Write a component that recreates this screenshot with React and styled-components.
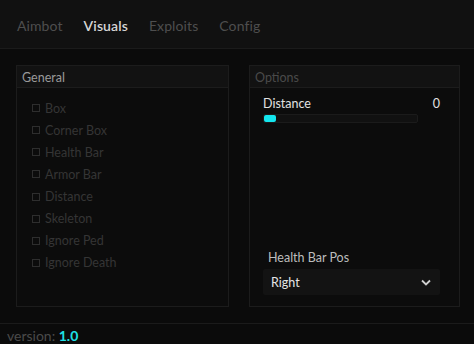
import React from "react";
import styled, { createGlobalStyle } from "styled-components";

const Global = createGlobalStyle`
  html, body { margin: 0; padding: 0; background: #0b0b0b; }
  body { font-family: "Lato", "Open Sans", sans-serif; overflow: hidden; }
  * { box-sizing: border-box; }
`;

const Frame = styled.div`
  width: 474px;
  height: 344px;
  display: flex;
  flex-direction: column;
  background: #0b0b0b;
`;

const TabBar = styled.div`
  height: 49px;
  background: #111111;
  border-bottom: 1px solid #1b1b1b;
  display: flex;
  align-items: center;
  padding: 2px 0 0 17px;
  gap: 21px;
`;

const Tab = styled.div`
  font-family: "Lato", sans-serif;
  font-size: 14px;
  font-weight: ${(p) => (p.$active ? 600 : 400)};
  color: ${(p) => (p.$active ? "#d6d6d6" : "#4e4e4e")};
  letter-spacing: 0.1px;
`;

const Body = styled.div`
  flex: 1;
  display: flex;
  gap: 20px;
  padding: 16px 14px 0 16px;
  border-bottom: 1px solid #1b1b1b;
`;

const Panel = styled.div`
  width: ${(p) => p.$w}px;
  height: 242px;
  border: 1px solid #1c1c1c;
  background: #0c0c0c;
  display: flex;
  flex-direction: column;
`;

const PanelHead = styled.div`
  height: 22px;
  background: #121212;
  border-bottom: 1px solid #1c1c1c;
  font-size: 12.5px;
  color: ${(p) => p.$color};
  padding: 4px 0 0 5px;
  line-height: 16px;
`;

const CheckList = styled.div`
  display: flex;
  flex-direction: column;
  gap: 6.15px;
  padding: 12px 0 0 15px;
`;

const CheckRow = styled.label`
  display: flex;
  align-items: center;
  gap: 5px;
  height: 16px;
  font-size: 12.5px;
  color: #353535;
`;

const Box = styled.span`
  width: 8px;
  height: 8px;
  border: 1px solid #2e2e2e;
  display: inline-block;
`;

const Options = styled.div`
  display: flex;
  flex-direction: column;
  padding: 8px 19px 0 13px;
  flex: 1;
`;

const SliderHead = styled.div`
  display: flex;
  justify-content: space-between;
  font-size: 12.5px;
  color: #e2e2e2;
  line-height: 16px;
`;

const Track = styled.div`
  margin-top: 2px;
  width: 155px;
  height: 9px;
  background: #111111;
  border: 1px solid #1b1b1b;
  border-radius: 2px;
`;

const Thumb = styled.div`
  width: 12px;
  height: 7px;
  background: #14e6ee;
  border-radius: 2px;
`;

const Spacer = styled.div`
  flex: 1;
`;

const SelectLabel = styled.div`
  font-size: 12.5px;
  color: #bdbdbd;
  padding-left: 5px;
  line-height: 16px;
`;

const Select = styled.div`
  margin: 3px 0 11px 0;
  height: 26px;
  background: #131313;
  border-radius: 2px;
  display: flex;
  align-items: center;
  justify-content: space-between;
  padding: 1px 9px 0 8px;
  font-size: 12.5px;
  color: #e6e6e6;
`;

const Footer = styled.div`
  height: 20px;
  padding: 4px 0 0 7px;
  font-size: 14px;
  color: #4a4a4a;
  line-height: 16px;
`;

const Version = styled.span`
  color: #1ee0e6;
  font-weight: 700;
`;

const items = ["Box", "Corner Box", "Health Bar", "Armor Bar", "Distance", "Skeleton", "Ignore Ped", "Ignore Death"];

export default function App() {
  return (
    <Frame>
      <Global />
      <TabBar>
        <Tab>Aimbot</Tab>
        <Tab $active>Visuals</Tab>
        <Tab>Exploits</Tab>
        <Tab>Config</Tab>
      </TabBar>
      <Body>
        <Panel $w={213}>
          <PanelHead $color="#9a9a9a">General</PanelHead>
          <CheckList>
            {items.map((t) => (
              <CheckRow key={t}>
                <Box />
                {t}
              </CheckRow>
            ))}
          </CheckList>
        </Panel>
        <Panel $w={211}>
          <PanelHead $color="#4a4a4a">Options</PanelHead>
          <Options>
            <SliderHead>
              <span>Distance</span>
              <span>0</span>
            </SliderHead>
            <Track>
              <Thumb />
            </Track>
            <Spacer />
            <SelectLabel>Health Bar Pos</SelectLabel>
            <Select>
              <span>Right</span>
              <svg width="10" height="7" viewBox="0 0 10 7">
                <path d="M1 1.5 L5 5.5 L9 1.5" stroke="#d0d0d0" strokeWidth="1.8" fill="none" />
              </svg>
            </Select>
          </Options>
        </Panel>
      </Body>
      <Footer>
        version: <Version>1.0</Version>
      </Footer>
    </Frame>
  );
}
